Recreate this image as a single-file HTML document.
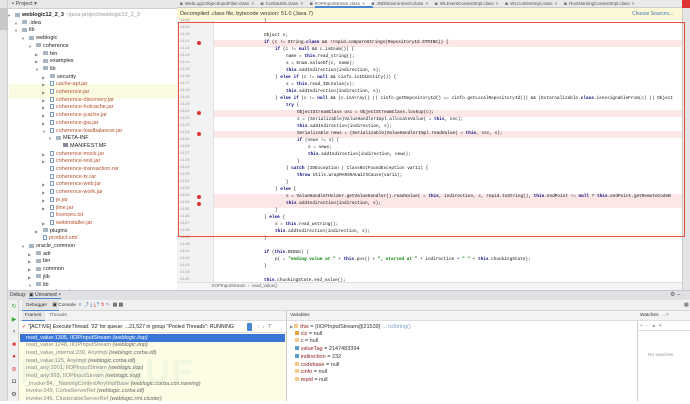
<!DOCTYPE html>
<html><head><meta charset="utf-8"><style>
*{margin:0;padding:0;box-sizing:border-box}
body{width:690px;height:401px;overflow:hidden;background:#fff;font-family:"Liberation Sans",sans-serif;position:relative}
.a{position:absolute;white-space:nowrap}
.t{font-size:5.5px;line-height:7.7px;height:7.7px}
.m{font-family:"Liberation Mono",monospace;font-size:4.4px;line-height:7px;height:7px}
.k{color:#000080;font-weight:bold}
.s{color:#008000;font-weight:bold}
.ln{color:#999;font-family:"Liberation Mono",monospace;font-size:4px}
.fi{display:inline-block;width:5px;height:4px;background:#a9b6c2;margin-right:2px;vertical-align:-0.5px}
.ji{display:inline-block;width:4px;height:5px;border:1px solid #7a9ec8;margin-right:2px;vertical-align:-1px}
.r{color:#b5502d}
</style></head><body>
<div class="a" style="left:0;top:0;width:8px;height:401px;background:#e4e4e4;border-right:1px solid #ccc"></div>
<div class="a" style="left:0;top:8px;width:8px;height:22px;background:#c8c8c8"></div>
<div class="a" style="left:8px;top:0;width:169px;height:9px;background:#e8e8e8;border-bottom:1px solid #d0d0d0"></div>
<div class="a t" style="left:12px;top:0;height:8px;line-height:8px;color:#444">▪ Project ▾</div>
<div class="a" style="left:9px;top:84px;width:168px;height:15px;background:#fbfbe2"></div>
<div id="tree"></div>
<div class="a" style="left:177px;top:0;width:513px;height:8px;background:#e9e9e9;border-bottom:1px solid #ccc"></div>
<div class="a" style="left:315px;top:0;width:58px;height:8px;background:#fff;border-bottom:2px solid #4a86d6"></div>
<div class="a" style="left:180px;top:0;font-size:4.5px;line-height:7px;color:#555;word-spacing:1px">◙ WebLogicObjectInputFilter.class ×&nbsp;&nbsp; ◙ CorbaUtils.class ×&nbsp;&nbsp; ◙ IIOPInputStream.class ×&nbsp;&nbsp; ◙ JNDIEnvironment.class ×&nbsp;&nbsp; ◙ WLEventContextImpl.class ×&nbsp;&nbsp; ◙ WLContextImpl.class ×&nbsp;&nbsp; ◙ RootNamingContextImpl.class ×</div>
<div class="a" style="left:177px;top:8px;width:505px;height:12px;background:#fcf8d6"></div>
<div class="a" style="left:180px;top:8px;font-size:5.5px;line-height:12px;color:#333">Decompiled .class file, bytecode version: 51.0 (Java 7)</div>
<div class="a" style="left:632px;top:8px;font-size:5px;line-height:12px;color:#3b73c4">Choose Sources...</div>
<div class="a" style="left:177px;top:20px;width:37px;height:262px;background:#f2f2f2;border-right:1px solid #e0e0e0"></div>
<div id="code"></div>
<div class="a" style="left:682px;top:0;width:8px;height:290px;background:#e4e4e4;border-left:1px solid #ccc"></div>
<div class="a" style="left:682px;top:0;width:8px;height:8px;background:#d33"></div>
<div class="a" style="left:178px;top:22px;width:507px;height:215px;border:1px solid #e8503a"></div>
<div class="a" style="left:177px;top:282px;width:505px;height:8px;background:#f5f5f5;border-top:1px solid #e0e0e0"></div>
<div class="a" style="left:212px;top:282px;font-size:4.5px;line-height:8px;color:#666">IIOPInputStream &nbsp;›&nbsp; read_value()</div>
<div class="a" style="left:8px;top:290px;width:682px;height:10px;background:#dfe1e5;border-top:1px solid #c9c9c9"></div>
<div class="a" style="left:10px;top:290px;font-size:5px;line-height:10px;color:#333">Debug: &nbsp;<span style="border-bottom:1.5px solid #4a86d6">▣ Unnamed ×</span></div>
<div class="a" style="left:670px;top:290px;font-size:6px;line-height:10px;color:#555">⚙ –</div>
<div class="a" style="left:8px;top:300px;width:682px;height:11px;background:#f0f0f0;border-bottom:1px solid #d6d6d6"></div>
<div class="a" style="left:22px;top:300px;width:37px;height:11px;background:#e4e4e4;border-bottom:1.5px solid #4a86d6"></div>
<div class="a" style="left:26px;top:300px;font-size:4.8px;line-height:11px;color:#333">Debugger &nbsp;&nbsp;&nbsp;▣ Console &nbsp;<span style="color:#3b73c4">≡ &nbsp;⤴ ⤓ </span><span style="color:#d33">⤓</span><span style="color:#3b73c4"> ⤒ </span><span style="color:#d33">↯</span><span style="color:#3b73c4"> ↖ &nbsp;</span>▦ ▩</div>
<div class="a" style="left:8px;top:300px;width:11px;height:101px;background:#f0f0f0;border-right:1px solid #d6d6d6"></div>
<div class="a" style="left:10px;top:301px;font-size:6px;line-height:12.5px;width:8px;text-align:center"><span style="color:#3a3">↻</span><br><span style="color:#3a3">▶</span><br><span style="color:#999">⏸</span><br><span style="color:#d33">■</span><br><span style="color:#d33">●</span><br><span style="color:#d33">⊘</span><br><span style="color:#444">◘</span><br><span style="color:#444">⚙</span></div>
<div class="a" style="left:19px;top:311px;width:267px;height:10px;background:#f3f3f3;border-bottom:1px solid #ddd"></div>
<div class="a" style="left:22px;top:311px;width:23px;height:10px;background:#e6e6e6;border-bottom:1.5px solid #4a86d6"></div>
<div class="a" style="left:25px;top:311px;font-size:4.8px;line-height:10px;color:#333">Frames &nbsp;&nbsp;&nbsp;&nbsp;&nbsp;<span style="color:#666">Threads</span></div>
<div class="a" style="left:19px;top:321px;width:267px;height:80px;background:#fdfde6"></div>
<div class="a" style="left:19px;top:321px;width:267px;height:12px;background:#fff;border-bottom:1px solid #ddd"></div>
<div class="a" style="left:22px;top:321px;font-size:5.2px;line-height:12px;color:#222"><span style="color:#e55">✔</span> "[ACTIVE] ExecuteThread: '22' for queue: ...21,527 in group "Pooled Threads": RUNNING</div>
<div class="a" style="left:247px;top:323px;width:5px;height:8px;background:#4a86d6;border-radius:1px"></div>
<div class="a" style="left:257px;top:321px;font-size:5px;line-height:12px;color:#777">↑ &nbsp;↓ &nbsp;<b>⊤</b></div>
<div class="a" style="left:20px;top:334px;width:265px;height:8px;background:#3875d6"></div>
<div class="a" style="left:20px;top:355px;font-size:34px;font-weight:bold;color:#d6ead0;opacity:.3;letter-spacing:2px;line-height:34px">FREEBUF</div>
<div id="frames"></div>
<div class="a" style="left:286px;top:311px;width:351px;height:10px;background:#f3f3f3;border-bottom:1px solid #ddd;border-left:1px solid #ccc"></div>
<div class="a" style="left:290px;top:311px;font-size:4.8px;line-height:10px;color:#333">Variables</div>
<div class="a" style="left:286px;top:321px;width:1px;height:80px;background:#ccc"></div>
<div id="vars"></div>
<div class="a" style="left:637px;top:311px;width:53px;height:90px;border-left:1px solid #ccc;background:#fff"></div>
<div class="a" style="left:637px;top:311px;width:53px;height:10px;background:#f3f3f3;border-bottom:1px solid #ddd"></div>
<div class="a" style="left:640px;top:311px;font-size:4.8px;line-height:10px;color:#333">Watches &nbsp;<span style="color:#888">→≡</span></div>
<div class="a" style="left:637px;top:321px;width:53px;height:10px;border-bottom:1px solid #ddd"></div>
<div class="a" style="left:640px;top:321px;font-size:5px;line-height:10px;color:#999">+ &nbsp;– &nbsp;▲ &nbsp;▾</div>
<div class="a" style="left:648px;top:353px;font-size:4.8px;color:#999">No watches</div>
<div class="a" style="left:684px;top:301px;font-size:5px;line-height:9px;color:#555">▦</div>
<script>
function esc(s){return s.replace(/&/g,'&amp;').replace(/</g,'&lt;')}
var T=[[0,'weblogic12_2_3','f',1],[1,'.idea','f'],[1,'lib','f'],[2,'weblogic','f'],[3,'coherence','f'],[4,'bin','f'],[4,'examples','f'],[4,'lib','f'],[5,'security','f'],[5,'cache-api.jar','j'],[5,'coherence.jar','j'],[5,'coherence-discovery.jar','j'],[5,'coherence-hotcache.jar','j'],[5,'coherence-jcache.jar','j'],[5,'coherence-jpa.jar','j'],[5,'coherence-loadbalancer.jar','j'],[6,'META-INF','f'],[7,'MANIFEST.MF','n'],[5,'coherence-mock.jar','j'],[5,'coherence-rest.jar','j'],[5,'coherence-transaction.rar','j'],[5,'coherence-tx.rar','j'],[5,'coherence-web.jar','j'],[5,'coherence-work.jar','j'],[5,'je.jar','j'],[5,'jline.jar','j'],[5,'licenses.txt','j'],[5,'webinstaller.jar','j'],[4,'plugins','f'],[4,'product.xml','j'],[2,'oracle_common','f'],[3,'adr','f'],[3,'bin','f'],[3,'common','f'],[3,'jlib','f'],[3,'lib','f'],[4,'schematypes','f']];
var h='';T.forEach(function(r,i){var x=23+7*r[0]-(r[0]>5?1:0);var y=12+i*7.7;var ic=r[2]=='f'?'<span class="fi"></span>':r[2]=='j'?'<span class="ji"></span>':'<span class="fi" style="background:#889"></span>';
var ar=(r[2]=='f'||r[1].indexOf('.jar')>0)&&r[0]<7?'<span style="position:absolute;left:-8px;color:#888;font-size:4px">'+(i<5||i==7||i==15||i==16||i==30||i==35?'▼':'▶')+'</span>':'';
var c=r[2]=='j'?'r':'';
var txt=r[3]?'<b>'+r[1]+'</b> <span style="color:#999">~/java-project/weblogic12_2_3</span>':r[1];
h+='<div class="a t '+c+'" style="left:'+(x-8)+'px;top:'+y+'px;color:'+(c?'':'#222')+'">'+ar+ic+txt+'</div>'});
document.getElementById('tree').innerHTML=h;
var L=[[2,'}'],[0,''],[2,'Object s;'],[2,'if (c != String.class && !repid.compareStrings(RepositoryId.STRING)) {',1],[3,'if (c != null && c.isEnum()) {'],[4,'name = this.read_string();'],[4,'s = Enum.valueOf(c, name);'],[4,'this.addIndirection(indirection, s);'],[3,'} else if (c != null && cinfo.isIDLEntity()) {'],[4,'s = this.read_IDLValue(c);'],[4,'this.addIndirection(indirection, s);'],[3,'} else if (c != null && (c.isArray() || cinfo.getRepositoryId() == cinfo.getLocalRepositoryId()) && (Externalizable.class.isAssignableFrom(c) || Object'],[4,'try {'],[5,'ObjectStreamClass osc = ObjectStreamClass.lookup(c);',1],[5,'s = (Serializable)ValueHandlerImpl.allocateValue( = this, osc);'],[5,'this.addIndirection(indirection, s);'],[5,'Serializable news = (Serializable)ValueHandlerImpl.readValue( = this, osc, s);',1],[5,'if (news != s) {'],[6,'s = news;'],[6,'this.addIndirection(indirection, news);'],[5,'}'],[4,'} catch (IOException | ClassNotFoundException var11) {'],[5,'throw Utils.wrapMARSHALWithCause(var11);'],[4,'}'],[3,'} else {'],[4,'s = ValueHandlerHolder.getValueHandler().readValue( = this, indirection, c, repid.toString(), this.endPoint != null ? this.endPoint.getRemoteCodeB',1],[4,'this.addIndirection(indirection, s);',1],[3,'}'],[2,'} else {'],[3,'s = this.read_wstring();'],[3,'this.addIndirection(indirection, s);'],[2,'}'],[0,''],[2,'if (this.DEBUG) {'],[3,'p( = "ending value at " + this.pos() + ", started at " + indirection + " " + this.chunkingState);'],[2,'}'],[0,''],[2,'this.chunkingState.end_value();']];
h='';L.forEach(function(r,i){var y=18+i*7;if(r[2])h+='<div class="a" style="left:214px;top:'+(y+0.5)+'px;width:468px;height:7px;background:#fbe8e6"></div>';
h+='<div class="a ln" style="left:180px;top:'+y+'px;line-height:7px">'+(1108+i)+'</div>';
if(r[2])h+='<div class="a" style="left:197px;top:'+(y+1.5)+'px;width:4px;height:4px;border-radius:50%;background:#d33"></div>';
var s=esc(r[1]);s=s.replace(/("[^"]*")/g,'<span class="s">$1</span>');s=s.replace(/\b(this|null|class|if|else|try|catch|throw)\b(?![^<]*<\/span>)/g,'<span class="k">$1</span>');
h+='<div class="a m" style="left:'+(242+11*r[0])+'px;top:'+y+'px;color:#111">'+s+'</div>'});
document.getElementById('code').innerHTML=h;
var F=[['read_value:1305, IIOPInputStream','weblogic.iiop'],['read_value:1248, IIOPInputStream','weblogic.iiop'],['read_value_internal:230, AnyImpl','weblogic.corba.idl'],['read_value:125, AnyImpl','weblogic.corba.idl'],['read_any:1001, IIOPInputStream','weblogic.iiop'],['read_any:993, IIOPInputStream','weblogic.iiop'],['_invoke:84, _NamingContextAnyImplBase','weblogic.corba.cos.naming'],['invoke:249, CorbaServerRef','weblogic.corba.idl'],['invoke:246, ClusterableServerRef','weblogic.rmi.cluster']];
h='';F.forEach(function(f,i){var sel=i==0;h+='<div class="a t" style="left:26px;top:'+(334.5+i*7.7)+'px;color:'+(sel?'#fff':'#888')+'">'+f[0]+' <i style="color:'+(sel?'#fff':'#666')+'">('+f[1]+')</i></div>'});
document.getElementById('frames').innerHTML=h;
var V=[['this','= {IIOPInputStream@21539} <span style="color:#7a9ec8">... toString()</span>','#f5c98a'],['clz','= null','#e8a33a'],['c','= null','#f5c98a'],['valueTag','= 2147483394','#5a9bc8'],['indirection','= 232','#5a9bc8'],['codebase','= null','#f5c98a'],['cinfo','= null','#f5c98a'],['repid','= null','#f5c98a']];
h='';V.forEach(function(v,i){h+='<div class="a t" style="left:290px;top:'+(323+i*7.7)+'px;color:#333">'+(i==0?'<span style="color:#888;font-size:4px">▶ </span>':'&nbsp;&nbsp;&nbsp;')+'<span style="display:inline-block;width:4px;height:4px;background:'+v[2]+';margin-right:2px"></span><span style="color:#8b1c1c">'+v[0]+'</span> '+v[1]+'</div>'});
document.getElementById('vars').innerHTML=h;
</script>
</body></html>
